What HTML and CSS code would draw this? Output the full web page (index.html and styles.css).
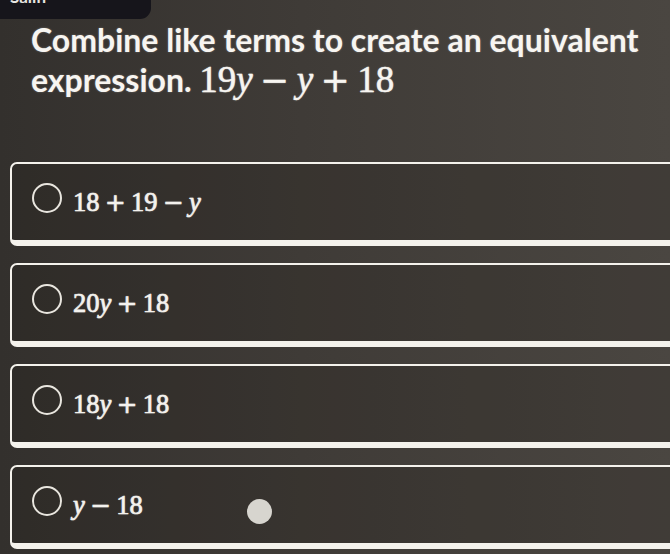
FILE: index.html
```html
<!DOCTYPE html>
<html>
<head>
<meta charset="utf-8">
<link rel="stylesheet" href="styles.css">
</head>
<body>
<div class="page">
  <div class="tab"><span class="tab-text">Salih</span></div>
  <p class="question">Combine like terms to create an equivalent expression. <span class="math big">19<i>y</i><span class="op">−</span><i>y</i><span class="op">+</span>18</span></p>
  <div class="options">
    <div class="option"><span class="radio"></span><span class="math">18<span class="op">+</span>19<span class="op">−</span><i>y</i></span></div>
    <div class="option"><span class="radio"></span><span class="math">20<i>y</i><span class="op">+</span>18</span></div>
    <div class="option"><span class="radio"></span><span class="math">18<i>y</i><span class="op">+</span>18</span></div>
    <div class="option"><span class="radio"></span><span class="math"><i>y</i><span class="op">−</span>18</span><span class="dot"></span></div>
  </div>
</div>
</body>
</html>
```

FILE: styles.css
```css
html, body {
  margin: 0;
  padding: 0;
  width: 670px;
  height: 554px;
  overflow: hidden;
}
body {
  background: linear-gradient(90deg, #33302d 0%, #3f3b37 45%, #4a4641 100%);
  color: #f4f2ee;
}
.page {
  position: relative;
  height: 554px;
}
.tab {
  width: 151px;
  height: 19px;
  background: #16151b;
  border-bottom-right-radius: 11px;
  overflow: hidden;
}
.tab-text {
  display: block;
  margin-top: -14px;
  margin-left: 10px;
  font: 700 17px "Lato", sans-serif;
  color: #e8e6e2;
}
.question {
  margin: 1px 0 0 31px;
  width: 636px;
  font-family: "Lato", sans-serif;
  font-weight: 700;
  font-size: 32px;
  line-height: 40px;
  color: #f7f5f1;
  text-shadow: 0 0 2px rgba(255, 255, 255, 0.35);
}
.math {
  font-family: "Liberation Serif", serif;
  font-size: 26.5px;
  font-weight: 400;
  white-space: nowrap;
  -webkit-text-stroke: 0.6px currentColor;
  text-shadow: 0 0 1.5px rgba(255, 255, 255, 0.6);
}
.math i {
  font-style: italic;
}
.op {
  font-family: "DejaVu Serif", serif;
  font-size: 0.93em;
  margin: 0 0.22em;
}
.math.big {
  font-size: 37px;
  line-height: 1;
  -webkit-text-stroke: 0.4px currentColor;
}
.options {
  margin-top: 62px;
  margin-left: 10px;
  display: flex;
  flex-direction: column;
  gap: 17px;
}
.option {
  position: relative;
  width: 700px;
  height: 84px;
  box-sizing: border-box;
  border: solid #f4f2ec;
  border-width: 2.5px 2px 6px 2px;
  border-radius: 7px;
  background: rgba(30, 27, 25, 0.22);
  display: flex;
  align-items: flex-start;
  padding: 19px 0 0 20px;
  gap: 11px;
}
.radio {
  width: 26px;
  height: 26px;
  border: 2px solid #e9e6df;
  border-radius: 50%;
  flex: none;
}
.option .math {
  line-height: 30px;
  margin-top: 4px;
}
.dot {
  position: absolute;
  left: 235px;
  top: 32px;
  width: 25px;
  height: 25px;
  border-radius: 50%;
  background: #d7d5cf;
}
```
